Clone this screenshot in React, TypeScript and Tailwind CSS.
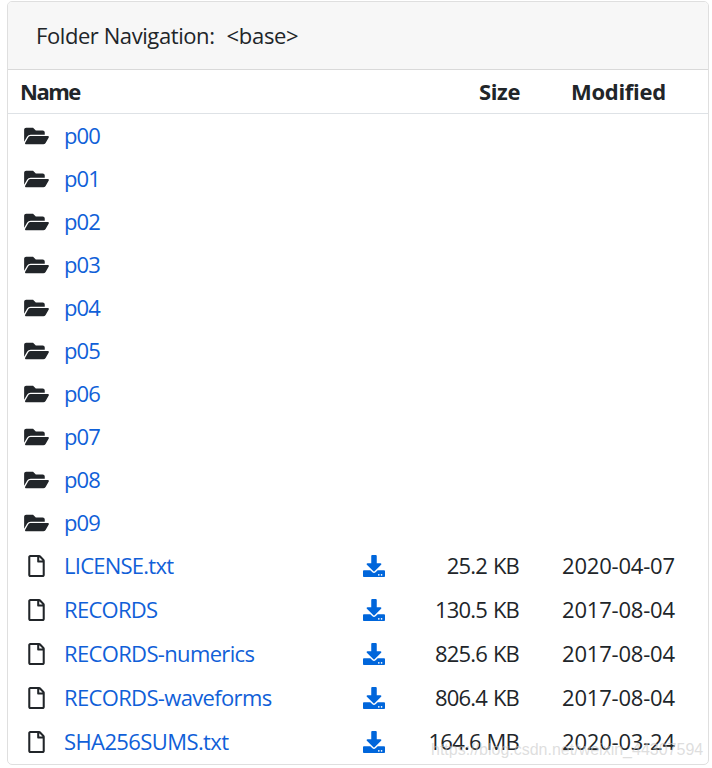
import { FaDownload, FaFolderOpen, FaRegFile } from "react-icons/fa";

const folders = ["p00", "p01", "p02", "p03", "p04", "p05", "p06", "p07", "p08", "p09"];

const files = [
  { name: "LICENSE.txt", size: "25.2 KB", modified: "2020-04-07", nameClass: "tracking-[-0.75px]" },
  { name: "RECORDS", size: "130.5 KB", modified: "2017-08-04", nameClass: "tracking-[-0.7px]" },
  { name: "RECORDS-numerics", size: "825.6 KB", modified: "2017-08-04", nameClass: "tracking-[-0.65px]" },
  { name: "RECORDS-waveforms", size: "806.4 KB", modified: "2017-08-04", nameClass: "tracking-[-0.65px]" },
  { name: "SHA256SUMS.txt", size: "164.6 MB", modified: "2020-03-24", nameClass: "tracking-[-0.6px]" },
];

export default function App() {
  return (
    <div className="relative h-[768px] w-[712px] bg-white pt-px pl-[7px] font-['Open_Sans','Noto_Sans',sans-serif] text-[22px] leading-[30px] font-normal text-[#212529]">
      <div className="h-[764px] w-[702px] overflow-hidden rounded-[5px] border border-[#dfdfdf]">
        <header className="flex h-[68px] items-center border-b border-[#d9d9d9] bg-[#f7f7f7] pb-0.5 pl-7">
          <span className="tracking-[-0.42px]">Folder Navigation:</span>
          <span className="ml-3 tracking-[-0.3px]">&lt;base&gt;</span>
        </header>
        <div className="flex h-[44px] items-center border-b border-[#dee2e6] pb-0.5 pl-3 font-bold">
          <span className="w-[380px] tracking-[-1.5px]">Name</span>
          <span className="w-[120px] text-right tracking-[-0.4px]">Size</span>
          <span className="pl-[51px] tracking-[-0.3px]">Modified</span>
        </div>
        {folders.map((name) => (
          <div key={name} className="flex h-[43px] items-center pl-4">
            <FaFolderOpen className="h-[22px] w-[25px]" />
            <a className="ml-[15px] pb-0.5 tracking-[-0.9px] text-[#1060d8]">{name}</a>
          </div>
        ))}
        {files.map((file) => (
          <div key={file.name} className="flex h-[44px] items-center pl-4">
            <FaRegFile className="h-[22px] w-[25px]" />
            <a className={"ml-[15px] w-[299px] pb-0.5 text-[#1060d8] " + file.nameClass}>{file.name}</a>
            <FaDownload className="h-[22px] w-[22px] text-[#0066db]" />
            <span className="w-[134px] pb-0.5 text-right tracking-[-0.8px] [word-spacing:1px]">{file.size}</span>
            <span className="ml-[43px] pb-0.5 tracking-[-0.2px]">{file.modified}</span>
          </div>
        ))}
      </div>
      <span className="absolute top-[740px] left-[431px] font-['Liberation_Sans',Arial,sans-serif] text-[16px] leading-5 font-normal whitespace-nowrap text-[#c8c8c8]/60">
        https://blog.csdn.net/weixin_44307594
      </span>
    </div>
  );
}
